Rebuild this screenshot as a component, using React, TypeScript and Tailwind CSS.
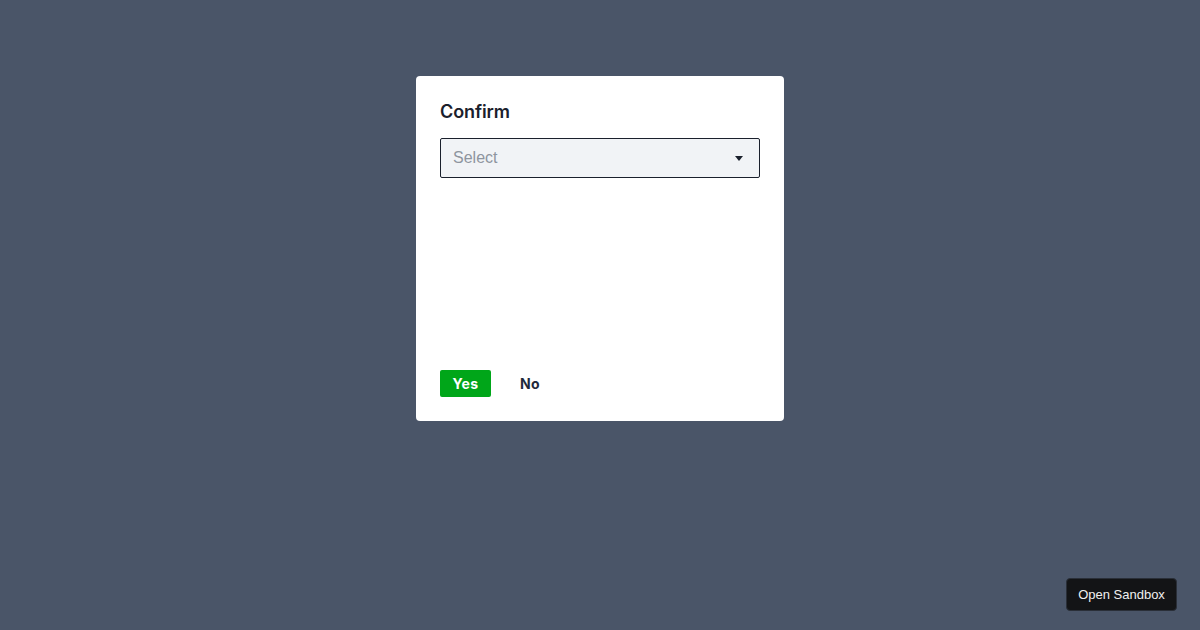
export default function App() {
  return (
    <div className="relative h-[630px] w-[1200px] bg-[#4a5568] overflow-hidden" style={{ fontFamily: "Inter, 'Liberation Sans', sans-serif" }}>
      <div className="flex justify-center pt-[76px]">
        <div className="flex h-[345px] w-[368px] flex-col rounded-[4px] bg-white px-6 pt-[24px] pb-6">
          <h2 className="text-[18px] font-semibold leading-6 tracking-[-0.1px] text-[#1a202c]">Confirm</h2>
          <div className="mt-[14px] flex h-10 w-[320px] items-center justify-between rounded-[2px] border border-[#1a202c] bg-[#f1f3f6] pl-3 pr-[16px]">
            <span className="text-[16px] text-[#8e959f]" style={{ fontFamily: "'Liberation Sans', Arial, sans-serif" }}>Select</span>
            <svg width="8" height="5" viewBox="0 0 8 5" className="text-[#1a202c]">
              <path d="M0 0 H8 L4 5 Z" fill="currentColor" />
            </svg>
          </div>
          <div className="flex-1" />
          <div className="flex items-center gap-[29px]">
            <button className="h-[27px] w-[51px] rounded-[2px] bg-[#00a619] pb-[1px] text-[14px] font-bold tracking-[0.3px] text-white">Yes</button>
            <button className="pb-[1px] text-[14px] font-bold tracking-[0.3px] text-[#1f2a3c]">No</button>
          </div>
        </div>
      </div>
      <div className="absolute left-[1066px] top-[578px] flex h-[33px] w-[111px] items-center justify-center rounded-[4px] border border-[#2a2f38] bg-[#131416] text-[13px] text-[#f0f0f0]" style={{ fontFamily: "'Liberation Sans', Arial, sans-serif" }}>
        Open Sandbox
      </div>
    </div>
  );
}
